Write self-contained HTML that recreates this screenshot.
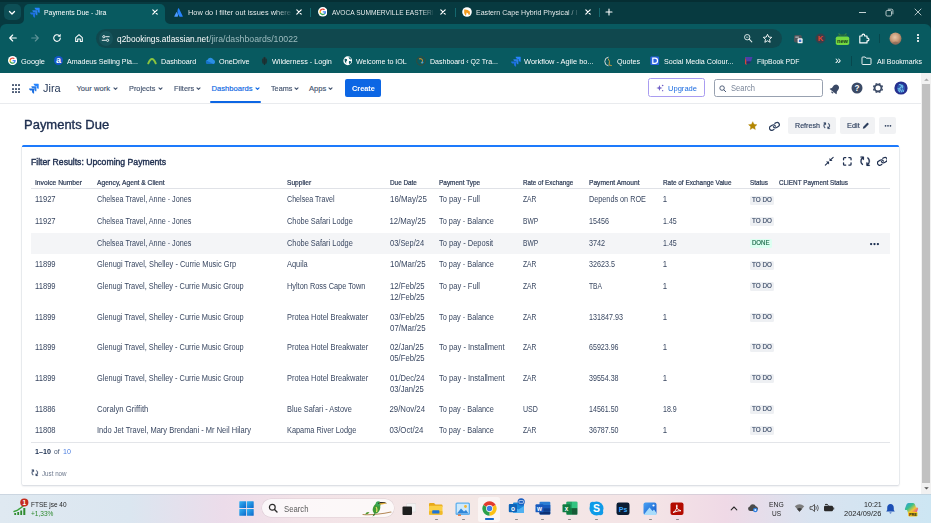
<!DOCTYPE html><html><head><meta charset="utf-8"><title>Payments Due - Jira</title><style>
html,body{margin:0;padding:0;}body{width:931px;height:523px;overflow:hidden;position:relative;background:#fff;font-family:"Liberation Sans", sans-serif;}#root{position:absolute;left:0;top:0;width:931px;height:523px;overflow:hidden;}#root div,#root svg{position:absolute;display:block;}span.t{position:absolute;white-space:nowrap;line-height:1;transform-origin:0 0;}
</style></head><body><div id="root">
<div style="left:0px;top:0px;width:931px;height:34px;background:#073a40;border-radius:0px;"></div>
<div style="left:0px;top:24px;width:931px;height:49px;background:#085a60;border-radius:0px;border-radius:6px 6px 0 0;"></div>
<div style="left:0px;top:0px;width:931px;height:1.5px;background:#052e33;border-radius:0px;"></div>
<div style="left:24.2px;top:3.5px;width:141px;height:21.5px;background:#085a60;border-radius:0px;border-radius:5px 5px 0 0;"></div>
<div style="left:4px;top:3.8px;width:16.5px;height:16.2px;background:#0d4f56;border-radius:5px;"></div>
<div style="left:310px;top:8px;width:1px;height:9px;background:#14686f;border-radius:0px;"></div>
<div style="left:455px;top:8px;width:1px;height:9px;background:#14686f;border-radius:0px;"></div>
<div style="left:599px;top:8px;width:1px;height:9px;background:#14686f;border-radius:0px;"></div>
<div style="left:858.5px;top:11.8px;width:7px;height:1px;background:#c3d3d4;border-radius:0px;"></div>
<div style="left:96px;top:28.5px;width:686px;height:19.5px;background:#10484e;border-radius:9.75px;"></div>
<div style="left:98.5px;top:31px;width:14.5px;height:14.5px;background:#16535a;border-radius:7.25px;"></div>
<div style="left:879.0px;top:33.5px;width:1px;height:9.5px;background:#07474d;border-radius:0px;"></div>
<div style="left:917.3px;top:34.45px;width:1.5px;height:1.5px;background:#ffffff;border-radius:0.75px;"></div>
<div style="left:917.3px;top:37.45px;width:1.5px;height:1.5px;background:#ffffff;border-radius:0.75px;"></div>
<div style="left:917.3px;top:40.45px;width:1.5px;height:1.5px;background:#ffffff;border-radius:0.75px;"></div>
<div style="left:851.2px;top:56px;width:1px;height:9.5px;background:#07474d;border-radius:0px;"></div>
<div style="left:0px;top:73px;width:921px;height:421.5px;background:#ffffff;border-radius:0px;"></div>
<div style="left:0px;top:102.9px;width:921px;height:1px;background:#e9ebee;border-radius:0px;"></div>
<div style="left:11.8px;top:84.3px;width:2.1px;height:2.1px;background:#42526e;border-radius:0.4px;"></div>
<div style="left:11.8px;top:87.6px;width:2.1px;height:2.1px;background:#42526e;border-radius:0.4px;"></div>
<div style="left:11.8px;top:90.89999999999999px;width:2.1px;height:2.1px;background:#42526e;border-radius:0.4px;"></div>
<div style="left:15.100000000000001px;top:84.3px;width:2.1px;height:2.1px;background:#42526e;border-radius:0.4px;"></div>
<div style="left:15.100000000000001px;top:87.6px;width:2.1px;height:2.1px;background:#42526e;border-radius:0.4px;"></div>
<div style="left:15.100000000000001px;top:90.89999999999999px;width:2.1px;height:2.1px;background:#42526e;border-radius:0.4px;"></div>
<div style="left:18.4px;top:84.3px;width:2.1px;height:2.1px;background:#42526e;border-radius:0.4px;"></div>
<div style="left:18.4px;top:87.6px;width:2.1px;height:2.1px;background:#42526e;border-radius:0.4px;"></div>
<div style="left:18.4px;top:90.89999999999999px;width:2.1px;height:2.1px;background:#42526e;border-radius:0.4px;"></div>
<div style="left:210px;top:101.4px;width:50.5px;height:2px;background:#0c66e4;border-radius:1px;"></div>
<div style="left:345px;top:79.2px;width:35.5px;height:17.8px;background:#0c66e4;border-radius:2px;"></div>
<div style="left:648.1px;top:78.4px;width:56.9px;height:19.1px;background:#ffffff;border-radius:2.5px;box-sizing:border-box;border:1px solid #a99cf0;"></div>
<div style="left:714.1px;top:79.4px;width:108.5px;height:17.2px;background:#ffffff;border-radius:2.5px;box-sizing:border-box;border:1px solid #98a1b0;"></div>
<div style="left:788px;top:116.9px;width:47.5px;height:17px;background:#f1f2f4;border-radius:2px;"></div>
<div style="left:840px;top:116.9px;width:35px;height:17px;background:#f1f2f4;border-radius:2px;"></div>
<div style="left:879.3px;top:116.9px;width:17.1px;height:17px;background:#f1f2f4;border-radius:2px;"></div>
<div style="left:22px;top:146px;width:877px;height:339px;background:#ffffff;border-radius:1.5px;box-shadow:0 0 0 0.5px #dcdfe4,0 1px 2px rgba(9,30,66,0.18);"></div>
<div style="left:22px;top:145.3px;width:877px;height:2px;background:#1d7afc;border-radius:0px;border-radius:1.5px 1.500px 0 0;"></div>
<div style="left:30.5px;top:187.8px;width:859.5px;height:1.5px;background:#e0e2e7;border-radius:0px;"></div>
<div style="left:30.5px;top:233.0px;width:859.5px;height:21.4px;background:#f4f5f7;border-radius:0px;"></div>
<div style="left:30.5px;top:441.9px;width:859.5px;height:1.5px;background:#e3e5e9;border-radius:0px;"></div>
<div style="left:750.3px;top:195.6px;width:23.5px;height:9.0px;background:#eef0f3;border-radius:1.5px;"></div>
<div style="left:750.3px;top:216.6px;width:23.5px;height:9.0px;background:#eef0f3;border-radius:1.5px;"></div>
<div style="left:750.3px;top:238.6px;width:21.8px;height:9.0px;background:#dcfff1;border-radius:1.5px;"></div>
<div style="left:750.3px;top:260.6px;width:23.5px;height:9.0px;background:#eef0f3;border-radius:1.5px;"></div>
<div style="left:750.3px;top:281.6px;width:23.5px;height:9.0px;background:#eef0f3;border-radius:1.5px;"></div>
<div style="left:750.3px;top:312.6px;width:23.5px;height:9.0px;background:#eef0f3;border-radius:1.5px;"></div>
<div style="left:750.3px;top:342.6px;width:23.5px;height:9.0px;background:#eef0f3;border-radius:1.5px;"></div>
<div style="left:750.3px;top:373.6px;width:23.5px;height:9.0px;background:#eef0f3;border-radius:1.5px;"></div>
<div style="left:750.3px;top:404.6px;width:23.5px;height:9.0px;background:#eef0f3;border-radius:1.5px;"></div>
<div style="left:750.3px;top:425.6px;width:23.5px;height:9.0px;background:#eef0f3;border-radius:1.5px;"></div>
<div style="left:921px;top:73px;width:10px;height:421.5px;background:#f1f1f1;border-radius:0px;"></div>
<div style="left:922.3px;top:83.5px;width:7.5px;height:399.2px;background:#c1c1c1;border-radius:0px;"></div>
<div style="left:0px;top:494.3px;width:931px;height:28.7px;background:linear-gradient(90deg,#dfe9f1 0%,#dbe6f0 14%,#ecdcea 24%,#f3e3e8 32%,#f4e8e6 50%,#f4e4e6 70%,#efd9e6 78%,#d9e3f0 87%,#cde6f3 100%);border-radius:0px;"></div>
<div style="left:0px;top:494.3px;width:931px;height:0.7px;background:rgba(170,180,195,0.35);border-radius:0px;"></div>
<div style="left:261.8px;top:499.3px;width:132px;height:18px;background:rgba(255,255,255,0.72);border-radius:9px;box-shadow:0 0 0 0.5px rgba(120,110,120,0.18);"></div>
<div style="left:434.5px;top:519px;width:3px;height:1.2px;background:#8a8a8a;border-radius:0.6px;"></div>
<div style="left:461.5px;top:519px;width:3px;height:1.2px;background:#8a8a8a;border-radius:0.6px;"></div>
<div style="left:478px;top:496.8px;width:22px;height:25px;background:rgba(255,255,255,0.55);border-radius:2.5px;"></div>
<div style="left:484.8px;top:518.3px;width:8.8px;height:1.6px;background:#1668c9;border-radius:0.8px;"></div>
<div style="left:514.5px;top:519px;width:3px;height:1.2px;background:#8a8a8a;border-radius:0.6px;"></div>
<div style="left:541px;top:519px;width:3px;height:1.2px;background:#8a8a8a;border-radius:0.6px;"></div>
<div style="left:568px;top:519px;width:3px;height:1.2px;background:#8a8a8a;border-radius:0.6px;"></div>
<div style="left:595px;top:519px;width:3px;height:1.2px;background:#8a8a8a;border-radius:0.6px;"></div>
<div style="left:648.5px;top:519px;width:3px;height:1.2px;background:#8a8a8a;border-radius:0.6px;"></div>
<div style="left:675.5px;top:519px;width:3px;height:1.2px;background:#8a8a8a;border-radius:0.6px;"></div>
<svg style="left:19px;top:19px;" width="5" height="5" viewBox="0 0 5 5"><path d="M5 0 V5 H0 A5 5 0 0 0 5 0Z" fill="#085a60"/></svg>
<svg style="left:165px;top:19px;" width="5" height="5" viewBox="0 0 5 5"><path d="M0 0 V5 H5 A5 5 0 0 1 0 0Z" fill="#085a60"/></svg>
<svg style="left:8px;top:9.5px;" width="8" height="6" viewBox="0 0 8 6"><path d="M1.5 1.5 L4 4 L6.5 1.5" fill="none" stroke="#fff" stroke-width="1.3" stroke-linecap="round" stroke-linejoin="round"/></svg>
<svg style="left:28.5px;top:7px;" width="11" height="11" viewBox="0 0 11 11"><g fill="#2684ff"><path d="M10.3 0.8H5.6c0 1.2 1 2.1 2.1 2.1h0.9v0.8c0 1.2 0.9 2.1 2.1 2.1V1.3c0-0.3-0.2-0.5-0.4-0.5z"/><path d="M8 3.2H3.3c0 1.2 1 2.1 2.1 2.1h0.9v0.9c0 1.2 0.9 2.1 2.1 2.1V3.7C8.400 3.400 8.200 3.200 8 3.200z" fill="#2b7de9"/><path d="M5.700 5.500H1c0 1.200 1 2.100 2.100 2.100H4v0.900c0 1.200 0.900 2.100 2.100 2.100V6C6.100 5.700 5.900 5.500 5.700 5.500z" fill="#1d6fe0"/></g></svg>
<svg style="left:151px;top:8.2px;" width="8" height="8" viewBox="0 0 8 8"><path d="M1.7999999999999998 1.7999999999999998 L6.2 6.2 M6.2 1.7999999999999998 L1.7999999999999998 6.2" stroke="#fff" stroke-width="1.2" stroke-linecap="round"/></svg>
<svg style="left:173.8px;top:7.5px;" width="9" height="9" viewBox="0 0 10 10"><path d="M3.100 4.600c-0.150-0.200-0.400-0.150-0.500 0.050L0.300 9.300c-0.100 0.200 0.050 0.450 0.300 0.450h3.300c0.100 0 0.200-0.050 0.250-0.150 0.700-1.450 0.300-3.700-1.050-5z" fill="#4c9aff"/><path d="M4.800 0.400C3.500 2.500 3.600 4.800 4.450 6.550l1.500 3c0.050 0.100 0.150 0.200 0.300 0.200h3.200c0.250 0 0.400-0.250 0.300-0.450L5.400 0.400c-0.100-0.250-0.450-0.250-0.600 0z" fill="#2684ff"/></svg>
<svg style="left:295px;top:8.2px;" width="8" height="8" viewBox="0 0 8 8"><path d="M1.7999999999999998 1.7999999999999998 L6.2 6.2 M6.2 1.7999999999999998 L1.7999999999999998 6.2" stroke="#fff" stroke-width="1.2" stroke-linecap="round"/></svg>
<svg style="left:317.7px;top:7.3999999999999995px;" width="9.6" height="9.6" viewBox="0 0 24 24"><circle cx="12" cy="12" r="12" fill="#fff"/><g transform="translate(3.6 3.6) scale(0.7)"><path fill="#4285F4" d="M23.500 12.300c0-0.800-0.100-1.600-0.200-2.300H12v4.500h6.500c-0.300 1.500-1.100 2.700-2.400 3.600v3h3.900c2.200-2.100 3.500-5.200 3.500-8.800z"/><path fill="#34A853" d="M12 24c3.200 0 6-1.100 8-2.900l-3.900-3c-1.100 0.700-2.500 1.200-4.100 1.200-3.100 0-5.800-2.100-6.700-5H1.300v3.100C3.300 21.300 7.300 24 12 24z"/><path fill="#FBBC05" d="M5.300 14.300c-0.200-0.700-0.400-1.500-0.400-2.300s0.100-1.600 0.400-2.300V6.600H1.300C0.500 8.200 0 10 0 12s0.500 3.800 1.300 5.400l4-3.100z"/><path fill="#EA4335" d="M12 4.800c1.800 0 3.300 0.600 4.600 1.800l3.400-3.400C17.900 1.200 15.200 0 12 0 7.300 0 3.300 2.700 1.300 6.600l4 3.100c0.900-2.900 3.600-4.900 6.700-4.900z"/></g></svg>
<svg style="left:439px;top:8.2px;" width="8" height="8" viewBox="0 0 8 8"><path d="M1.7999999999999998 1.7999999999999998 L6.2 6.2 M6.2 1.7999999999999998 L1.7999999999999998 6.2" stroke="#fff" stroke-width="1.2" stroke-linecap="round"/></svg>
<svg style="left:461.5px;top:7.4px;" width="10" height="10" viewBox="0 0 10 10"><circle cx="5" cy="5" r="4.800" fill="#fff"/><path d="M2.200 2.500 Q5.500 2 7.800 4.500 Q8.500 6.500 7 8.500 Q6.500 6 4.500 5.500 Q4.800 7.500 3.500 8.800 Q1.500 6 2.200 2.500Z" fill="#f39a1e"/></svg>
<svg style="left:584px;top:8.2px;" width="8" height="8" viewBox="0 0 8 8"><path d="M1.7999999999999998 1.7999999999999998 L6.2 6.2 M6.2 1.7999999999999998 L1.7999999999999998 6.2" stroke="#fff" stroke-width="1.2" stroke-linecap="round"/></svg>
<svg style="left:605px;top:8px;" width="8" height="8" viewBox="0 0 8 8"><path d="M4 1 V7 M1 4 H7" stroke="#fff" stroke-width="1.100" stroke-linecap="round"/></svg>
<svg style="left:885px;top:7.5px;" width="9" height="9" viewBox="0 0 9 9"><rect x="1" y="2.500" width="5.500" height="5.500" rx="1.200" fill="none" stroke="#c3d3d4" stroke-width="0.900"/><path d="M2.800 1.200 H6.600 A1.300 1.300 0 0 1 7.900 2.500 V6.300" fill="none" stroke="#c3d3d4" stroke-width="0.900"/></svg>
<svg style="left:913.5px;top:8px;" width="8" height="8" viewBox="0 0 8 8"><path d="M1.0 1.0 L7.0 7.0 M7.0 1.0 L1.0 7.0" stroke="#c3d3d4" stroke-width="0.9" stroke-linecap="round"/></svg>
<svg style="left:8.2px;top:33.2px;" width="10" height="10" viewBox="0 0 10 10"><path d="M8.3 5 H1.7000000000000002 M4.7 2 L1.7000000000000002 5 L4.7 8" fill="none" stroke="#ffffff" stroke-width="1.100" stroke-linecap="round" stroke-linejoin="round"/></svg>
<svg style="left:30.200000000000003px;top:33.2px;" width="10" height="10" viewBox="0 0 10 10"><path d="M1.7000000000000002 5 H8.3 M5.3 2 L8.3 5 L5.3 8" fill="none" stroke="#5d9297" stroke-width="1.100" stroke-linecap="round" stroke-linejoin="round"/></svg>
<svg style="left:52px;top:33px;" width="10" height="10" viewBox="0 0 10 10"><path d="M8.300 5 A3.300 3.300 0 1 1 7.300 2.650" fill="none" stroke="#fff" stroke-width="1.100" stroke-linecap="round"/><path d="M8.400 1.300 V3.500 H6.200 Z" fill="#fff" stroke="#fff" stroke-width="0.500" stroke-linejoin="round"/></svg>
<svg style="left:73.5px;top:33px;" width="10" height="10" viewBox="0 0 10 10"><path d="M1.700 4.600 L5 1.700 L8.300 4.600 V8.500 H6.300 V5.900 H3.700 V8.500 H1.700 Z" fill="none" stroke="#fff" stroke-width="1.050" stroke-linejoin="round"/></svg>
<svg style="left:101px;top:34px;" width="10" height="9" viewBox="0 0 10 9"><circle cx="2.800" cy="2.700" r="1.100" fill="none" stroke="#fff" stroke-width="0.900"/><path d="M4.800 2.700 H8.200" stroke="#fff" stroke-width="0.900" stroke-linecap="round"/><circle cx="6.600" cy="6.300" r="1.100" fill="none" stroke="#fff" stroke-width="0.900"/><path d="M1.200 6.300 H4.600" stroke="#fff" stroke-width="0.900" stroke-linecap="round"/></svg>
<svg style="left:743px;top:33px;" width="10" height="10" viewBox="0 0 10 10"><circle cx="4.200" cy="4.200" r="2.700" fill="none" stroke="#dfeaea" stroke-width="0.950"/><path d="M6.200 6.200 L8.800 8.800" stroke="#dfeaea" stroke-width="1.100" stroke-linecap="round"/><path d="M3 4.200 H5.400" stroke="#dfeaea" stroke-width="0.700"/></svg>
<svg style="left:762px;top:32.5px;" width="11" height="11" viewBox="0 0 11 11"><path d="M5.500 1.300 L6.750 4.050 L9.750 4.350 L7.500 6.350 L8.150 9.300 L5.500 7.750 L2.850 9.300 L3.500 6.350 L1.250 4.350 L4.250 4.050 Z" fill="none" stroke="#fff" stroke-width="0.900" stroke-linejoin="round"/></svg>
<svg style="left:792.5px;top:33.5px;" width="11" height="11" viewBox="0 0 11 11"><rect x="1" y="1" width="7.800" height="7.500" rx="1.700" fill="#50555b"/><rect x="2.300" y="2.600" width="3.600" height="1" fill="#c9cdd1"/><rect x="4.600" y="4.300" width="5" height="5" rx="0.900" fill="#f4f4f4"/><rect x="5.900" y="5.600" width="2.400" height="2.400" fill="#3f76c9"/></svg>
<svg style="left:814.5px;top:32.8px;" width="11" height="11" viewBox="0 0 11 11"><circle cx="5.500" cy="5.500" r="5" fill="#3a3f4a"/><text x="5.500" y="8.200" font-size="7.500" font-weight="700" font-family="Liberation Sans, sans-serif" fill="#e8402a" text-anchor="middle">K</text></svg>
<svg style="left:835px;top:32px;" width="15" height="14" viewBox="0 0 15 14"><path d="M4 1.500 L5.500 3.500 M11 1.500 L9.500 3.500" stroke="#5fd33a" stroke-width="0.700"/><rect x="3" y="2.500" width="9" height="1.300" fill="#2c6b3a"/><rect x="0.800" y="4.500" width="13.400" height="8.500" rx="1.800" fill="#74d840"/><text x="7.500" y="11.300" font-size="5.600" font-weight="700" font-family="Liberation Sans, sans-serif" fill="#14351a" text-anchor="middle">new</text></svg>
<svg style="left:857.8px;top:32.2px;" width="12" height="12" viewBox="0 0 12 12"><path d="M1.800 4 H4 V3.400 A1.350 1.350 0 0 1 6.700 3.400 V4 H9 V6.100 H9.600 A1.350 1.350 0 0 1 9.600 8.800 H9 V10.900 H1.800 Z" fill="none" stroke="#fff" stroke-width="1.150" stroke-linejoin="round"/></svg>
<svg style="left:889.0px;top:32px;" width="13" height="13" viewBox="0 0 13 13"><defs><radialGradient id="av" cx="0.450" cy="0.400" r="0.700"><stop offset="0" stop-color="#e9c7a8"/><stop offset="0.500" stop-color="#c89a78"/><stop offset="1" stop-color="#7a5a48"/></radialGradient></defs><circle cx="6.500" cy="6.500" r="6" fill="url(#av)"/><path d="M3 11.500 Q6.500 7.500 10 11.500 A6 6 0 0 1 3 11.500Z" fill="#8a6a5a" opacity="0.700"/></svg>
<svg style="left:7.6px;top:55.9px;" width="9.2" height="9.2" viewBox="0 0 24 24"><circle cx="12" cy="12" r="12" fill="#fff"/><g transform="translate(3.6 3.6) scale(0.7)"><path fill="#4285F4" d="M23.500 12.300c0-0.800-0.100-1.600-0.200-2.300H12v4.500h6.500c-0.300 1.500-1.100 2.700-2.400 3.600v3h3.900c2.200-2.100 3.500-5.200 3.500-8.800z"/><path fill="#34A853" d="M12 24c3.200 0 6-1.100 8-2.900l-3.900-3c-1.100 0.700-2.500 1.200-4.100 1.200-3.100 0-5.800-2.100-6.700-5H1.300v3.100C3.300 21.300 7.300 24 12 24z"/><path fill="#FBBC05" d="M5.300 14.300c-0.200-0.700-0.400-1.500-0.400-2.300s0.100-1.600 0.400-2.300V6.600H1.300C0.500 8.200 0 10 0 12s0.500 3.800 1.300 5.400l4-3.100z"/><path fill="#EA4335" d="M12 4.800c1.800 0 3.300 0.600 4.600 1.800l3.400-3.400C17.900 1.200 15.200 0 12 0 7.300 0 3.300 2.700 1.300 6.600l4 3.100c0.900-2.900 3.600-4.900 6.700-4.900z"/></g></svg>
<svg style="left:53.5px;top:56px;" width="9" height="9" viewBox="0 0 9 9"><circle cx="4.500" cy="4.500" r="4.500" fill="#1457c8"/><text x="4.500" y="7.300" font-size="9" font-weight="700" font-family="Liberation Sans, sans-serif" fill="#fff" text-anchor="middle">a</text></svg>
<svg style="left:147px;top:57px;" width="10" height="8" viewBox="0 0 10 8"><path d="M1.300 6.300 Q5 -2.300 8.700 6.300" fill="none" stroke="#8bc53f" stroke-width="2" stroke-linecap="round"/></svg>
<svg style="left:205px;top:56.5px;" width="11" height="8" viewBox="0 0 11 8"><path d="M2.800 7 A2.200 2.200 0 0 1 2.600 2.700 A3 3 0 0 1 8.200 2.600 A2.300 2.300 0 0 1 8.600 7 Z" fill="#2a8fe4"/><path d="M2.800 7 A2.200 2.200 0 0 1 1.200 3.500 L8.600 7 Z" fill="#1670c8"/></svg>
<svg style="left:259.5px;top:56px;" width="9" height="10" viewBox="0 0 9 10"><path d="M4.500 0.800 C8 2.500 8 6.500 4.500 9.200 C1 6.500 1 2.500 4.500 0.800Z" fill="#23393b"/><path d="M4.500 1.500 V9 M3 3 V7.500 M6 3 V7.500" stroke="#0f2a2d" stroke-width="0.600"/></svg>
<svg style="left:342.5px;top:56px;" width="9.5" height="9.5" viewBox="0 0 9.5 9.5"><circle cx="4.750" cy="4.750" r="4.400" fill="#fff"/><path d="M1.500 3 Q3 2.200 4 3.300 Q4.500 4.600 3.300 5.300 Q2.800 6.500 3.600 7.800 Q1.300 6.500 1.500 3Z M5.500 1 Q7.500 1.500 8.300 3.300 Q7 3.600 6.300 2.800 Z M6 5 Q7.500 4.600 8.500 5.600 Q8 7.600 6.300 8.300 Q5.600 6.600 6 5Z" fill="#0c5a61"/></svg>
<svg style="left:415.5px;top:56px;" width="10" height="10" viewBox="0 0 10 10"><circle cx="5" cy="5" r="4.300" fill="none" stroke="#3b4a3a" stroke-width="1"/><path d="M3 3 Q5 2 6.500 4 Q7 6 5 7" fill="none" stroke="#c98a2b" stroke-width="1.100"/><circle cx="6.400" cy="6.600" r="1" fill="#4aa0d8"/></svg>
<svg style="left:509.5px;top:55.5px;" width="11" height="11" viewBox="0 0 11 11"><g fill="#2684ff"><path d="M10.300 0.800H5.600c0 1.200 1 2.100 2.100 2.100h0.900v0.800c0 1.200 0.900 2.100 2.100 2.100V1.300c0-0.300-0.200-0.500-0.400-0.500z"/><path d="M8 3.200H3.300c0 1.200 1 2.100 2.100 2.100h0.900v0.900c0 1.200 0.900 2.100 2.100 2.100V3.700C8.400 3.400 8.200 3.200 8 3.200z" fill="#2b7de9"/><path d="M5.700 5.500H1c0 1.200 1 2.100 2.100 2.100H4v0.900c0 1.200 0.900 2.100 2.100 2.100V6C6.100 5.700 5.900 5.500 5.700 5.500z" fill="#1d6fe0"/></g></svg>
<svg style="left:603px;top:55.5px;" width="10" height="11" viewBox="0 0 10 11"><path d="M5.500 1.200 Q1.800 1.500 1.800 5.500 Q1.800 9.500 5.500 9.800" fill="none" stroke="#e8e8e8" stroke-width="0.900"/><path d="M5 2.500 Q7.500 5 6 9 M6 9 L8.800 9.600" fill="none" stroke="#d9a23a" stroke-width="0.900"/></svg>
<svg style="left:650px;top:56px;" width="9.5" height="9.5" viewBox="0 0 9.5 9.5"><rect x="0.400" y="0.400" width="8.700" height="8.700" rx="1" fill="#2b63e0"/><path d="M2.800 2.200 H5 A2.550 2.550 0 0 1 5 7.300 H2.800 Z" fill="none" stroke="#fff" stroke-width="1.200"/></svg>
<svg style="left:744px;top:56px;" width="10" height="10" viewBox="0 0 10 10"><path d="M1 1 H8.500 L7 5.500 H2.500 Z" fill="#4b3fa8"/><path d="M1 1 L2.500 5.500 L2.500 9 L1 8 Z" fill="#d8433a"/><path d="M2.500 5.500 H7 L5.500 7.500 H2.500Z" fill="#2c2470"/></svg>
<svg style="left:861.0px;top:56px;" width="11" height="9.5" viewBox="0 0 11 9.5"><path d="M1 1.800 Q1 1 1.800 1 H4.200 L5.300 2.200 H9.200 Q10 2.200 10 3 V7.700 Q10 8.500 9.200 8.500 H1.800 Q1 8.500 1 7.700 Z" fill="none" stroke="#fff" stroke-width="0.900" stroke-linejoin="round"/></svg>
<svg style="left:27.8px;top:83px;" width="11" height="11" viewBox="0 0 11 11"><g><path d="M10.300 0.800H5.600c0 1.200 1 2.100 2.100 2.100h0.900v0.800c0 1.200 0.900 2.100 2.100 2.100V1.300c0-0.300-0.200-0.500-0.400-0.500z" fill="#2684ff"/><path d="M8 3.200H3.300c0 1.200 1 2.100 2.100 2.100h0.900v0.900c0 1.200 0.900 2.100 2.100 2.100V3.700C8.400 3.400 8.200 3.200 8 3.200z" fill="#2b7de9"/><path d="M5.700 5.500H1c0 1.200 1 2.100 2.100 2.100H4v0.900c0 1.200 0.900 2.100 2.100 2.100V6C6.100 5.700 5.900 5.500 5.700 5.500z" fill="#1d6fe0"/></g></svg>
<svg style="left:112.7px;top:86.5px;" width="5" height="4" viewBox="0 0 5 4"><path d="M1.000 0.900 L2.500 2.400 L4.000 0.900" fill="none" stroke="#44546f" stroke-width="1.150" stroke-linecap="round" stroke-linejoin="round"/></svg>
<svg style="left:157.7px;top:86.5px;" width="5" height="4" viewBox="0 0 5 4"><path d="M1.000 0.900 L2.500 2.400 L4.000 0.900" fill="none" stroke="#44546f" stroke-width="1.150" stroke-linecap="round" stroke-linejoin="round"/></svg>
<svg style="left:196.2px;top:86.5px;" width="5" height="4" viewBox="0 0 5 4"><path d="M1.000 0.900 L2.500 2.400 L4.000 0.900" fill="none" stroke="#44546f" stroke-width="1.150" stroke-linecap="round" stroke-linejoin="round"/></svg>
<svg style="left:254.7px;top:86.5px;" width="5" height="4" viewBox="0 0 5 4"><path d="M1.000 0.900 L2.500 2.400 L4.000 0.900" fill="none" stroke="#0c66e4" stroke-width="1.150" stroke-linecap="round" stroke-linejoin="round"/></svg>
<svg style="left:293.7px;top:86.5px;" width="5" height="4" viewBox="0 0 5 4"><path d="M1.000 0.900 L2.500 2.400 L4.000 0.900" fill="none" stroke="#44546f" stroke-width="1.150" stroke-linecap="round" stroke-linejoin="round"/></svg>
<svg style="left:328.2px;top:86.5px;" width="5" height="4" viewBox="0 0 5 4"><path d="M1.000 0.900 L2.500 2.400 L4.000 0.900" fill="none" stroke="#44546f" stroke-width="1.150" stroke-linecap="round" stroke-linejoin="round"/></svg>
<svg style="left:655.8px;top:84.4px;" width="8" height="8" viewBox="0 0 7 7"><path d="M3 0.800 L3.700 2.800 L5.700 3.500 L3.700 4.200 L3 6.200 L2.300 4.200 L0.300 3.500 L2.300 2.800Z" fill="#6e5dc6"/><circle cx="5.800" cy="1.300" r="0.700" fill="#6e5dc6"/><circle cx="5.800" cy="5.800" r="0.600" fill="#6e5dc6"/></svg>
<svg style="left:718.8px;top:84.7px;" width="7.5" height="7.5" viewBox="0 0 7 7"><circle cx="2.900" cy="2.900" r="2.100" fill="none" stroke="#44546f" stroke-width="0.850"/><path d="M4.500 4.500 L6.300 6.300" stroke="#44546f" stroke-width="0.900" stroke-linecap="round"/></svg>
<svg style="left:828.9px;top:82.6px;" width="12" height="12" viewBox="0 0 12 12"><g transform="rotate(38 6 6)" fill="#3b4a66"><path d="M6 1.300 C3.700 1.300 2.900 3.200 2.900 5 V7 L1.800 8.500 V9.300 H10.200 V8.500 L9.100 7 V5 C9.100 3.200 8.300 1.300 6 1.300Z"/><path d="M4.700 9.900 H7.300 A1.300 1.300 0 0 1 4.700 9.900Z"/></g></svg>
<svg style="left:850.5px;top:82.3px;" width="12" height="12" viewBox="0 0 12 12"><circle cx="6" cy="6" r="5.500" fill="#3b4a66"/><text x="6" y="8.900" font-size="8.200" font-weight="700" font-family="Liberation Sans, sans-serif" fill="#fff" text-anchor="middle">?</text></svg>
<svg style="left:872.2px;top:82.3px;" width="12" height="12" viewBox="0 0 12 12"><circle cx="6" cy="6" r="3.350" fill="none" stroke="#3b4a66" stroke-width="1.700"/><g stroke="#3b4a66" stroke-width="2.100"><path d="M9.60 7.49 L10.67 7.93"/><path d="M7.49 9.60 L7.93 10.67"/><path d="M4.51 9.60 L4.07 10.67"/><path d="M2.40 7.49 L1.33 7.93"/><path d="M2.40 4.51 L1.33 4.07"/><path d="M4.51 2.40 L4.07 1.33"/><path d="M7.49 2.40 L7.93 1.33"/><path d="M9.60 4.51 L10.67 4.07"/></g></svg>
<svg style="left:894.3px;top:81.3px;" width="14" height="14" viewBox="0 0 14 14"><circle cx="7" cy="7" r="6.600" fill="#27308f"/><ellipse cx="7" cy="7.300" rx="4" ry="4.600" fill="#2f5fb5" opacity="0.850"/><path d="M5.300 3.500 Q7.800 3.800 7.300 5.800 Q6.500 7.300 4.800 7.800 Q6.800 8.500 7.800 10.800 M8.300 4.500 Q9.300 5.800 8.300 7 M4.300 9 Q5.800 9.500 5.300 10.800 M8.300 8.800 Q9.800 9.300 9.300 10.500" fill="none" stroke="#6fc0ea" stroke-width="1.100" stroke-linecap="round"/></svg>
<svg style="left:748.2px;top:121.2px;" width="9.5" height="9.5" viewBox="0 0 10.5 10.5"><path d="M5.250 0.700 L6.650 3.650 L9.900 4.050 L7.500 6.250 L8.150 9.450 L5.250 7.850 L2.350 9.450 L3 6.250 L0.600 4.050 L3.850 3.650 Z" fill="#b38600" stroke="#b38600" stroke-width="0.400" stroke-linejoin="round"/></svg>
<svg style="left:769.3px;top:120.7px;" width="10.8" height="10.8" viewBox="0 0 24 24"><g fill="none" stroke="#2c3e5d" stroke-width="2.8" stroke-linecap="round" stroke-linejoin="round" transform="rotate(12 12 12)"><path d="M10 13a5 5 0 0 0 7.540 0.540l3-3a5 5 0 0 0-7.070-7.070l-1.720 1.710"/><path d="M14 11a5 5 0 0 0-7.540-0.540l-3 3a5 5 0 0 0 7.070 7.070l1.710-1.710"/></g></svg>
<svg style="left:822.12px;top:120.83px;" width="9.45" height="9.45" viewBox="0 0 24 24"><path fill="#2c3e5d" stroke="#2c3e5d" stroke-width="0.5" d="M8 6.003v2.995a1 1 0 1 0 2 0V5.102C10 4.494 9.507 4 8.900 4H5a1 1 0 0 0 0 2.003h1.672A7.995 7.995 0 0 0 4 12c0 2.370 1.033 4.537 2.769 6.018a1 1 0 1 0 1.298-1.521A5.985 5.985 0 0 1 6 12a5.990 5.990 0 0 1 2-4.462z m8 11.994v-2.995a1 1 0 1 0-2 0v3.896c0 .608.493 1.102 1.100 1.102H19a1 1 0 0 0 0-2.003h-1.672A7.995 7.995 0 0 0 20 12c0-2.370-1.033-4.537-2.769-6.018a1 1 0 1 0-1.298 1.521A5.985 5.985 0 0 1 18 12a5.990 5.990 0 0 1-2 4.462z"/></svg>
<svg style="left:862.3px;top:122px;" width="7.5" height="7.5" viewBox="0 0 7.5 7.5"><path d="M0.800 6.700 L1.300 4.700 L5 1 Q5.500 0.500 6.100 1.100 L6.400 1.400 Q7 2 6.500 2.500 L2.800 6.200 Z" fill="#2c3e5d"/></svg>
<svg style="left:883px;top:123px;" width="10" height="6" viewBox="0 0 10 6"><circle cx="2.550" cy="2.850" r="0.850" fill="#2c3e5d"/><circle cx="5" cy="2.850" r="0.850" fill="#2c3e5d"/><circle cx="7.450" cy="2.850" r="0.850" fill="#2c3e5d"/></svg>
<svg style="left:824.3px;top:155.7px;" width="10.5" height="10.5" viewBox="0 0 24 24"><g stroke="#1f2f4f" stroke-width="2.400" stroke-linecap="round"><path d="M15.500 8.500 L21 3 M8.500 15.500 L3 21"/></g><path d="M12.500 4.500 V11.500 H19.500 Z" fill="#1f2f4f"/><path d="M11.500 19.500 V12.500 H4.500 Z" fill="#1f2f4f"/></svg>
<svg style="left:841.9px;top:155.8px;" width="10.6" height="10.6" viewBox="0 0 24 24"><g fill="none" stroke="#1f2f4f" stroke-width="2.900" stroke-linecap="round" stroke-linejoin="round"><path d="M3.500 8.500 V5.500 Q3.500 3.500 5.500 3.500 H8.500 M15.500 3.500 H18.500 Q20.500 3.500 20.500 5.500 V8.500 M20.500 15.500 V18.500 Q20.500 20.500 18.500 20.500 H15.500 M8.500 20.500 H5.500 Q3.500 20.500 3.500 18.500 V15.500"/></g></svg>
<svg style="left:857.52px;top:153.93px;" width="14.25" height="14.25" viewBox="0 0 24 24"><path fill="#1f2f4f" stroke="#1f2f4f" stroke-width="0.3" d="M8 6.003v2.995a1 1 0 1 0 2 0V5.102C10 4.494 9.507 4 8.900 4H5a1 1 0 0 0 0 2.003h1.672A7.995 7.995 0 0 0 4 12c0 2.370 1.033 4.537 2.769 6.018a1 1 0 1 0 1.298-1.521A5.985 5.985 0 0 1 6 12a5.990 5.990 0 0 1 2-4.462z m8 11.994v-2.995a1 1 0 1 0-2 0v3.896c0 .608.493 1.102 1.100 1.102H19a1 1 0 0 0 0-2.003h-1.672A7.995 7.995 0 0 0 20 12c0-2.370-1.033-4.537-2.769-6.018a1 1 0 1 0-1.298 1.521A5.985 5.985 0 0 1 18 12a5.990 5.990 0 0 1-2 4.462z"/></svg>
<svg style="left:876.6px;top:155.8px;" width="10.7" height="10.7" viewBox="0 0 24 24"><g fill="none" stroke="#1f2f4f" stroke-width="2.8" stroke-linecap="round" stroke-linejoin="round" transform="rotate(12 12 12)"><path d="M10 13a5 5 0 0 0 7.540 0.540l3-3a5 5 0 0 0-7.070-7.070l-1.720 1.710"/><path d="M14 11a5 5 0 0 0-7.540-0.540l-3 3a5 5 0 0 0 7.070 7.070l1.710-1.710"/></g></svg>
<svg style="left:868px;top:241px;" width="14" height="6" viewBox="0 0 14 6"><circle cx="3.100" cy="3.100" r="1.150" fill="#172b4d"/><circle cx="6.500" cy="3.100" r="1.150" fill="#172b4d"/><circle cx="9.900" cy="3.100" r="1.150" fill="#172b4d"/></svg>
<svg style="left:30.0px;top:468.1px;" width="9.6" height="9.6" viewBox="0 0 24 24"><path fill="#44546f" stroke="#44546f" stroke-width="0.5" d="M8 6.003v2.995a1 1 0 1 0 2 0V5.102C10 4.494 9.507 4 8.900 4H5a1 1 0 0 0 0 2.003h1.672A7.995 7.995 0 0 0 4 12c0 2.370 1.033 4.537 2.769 6.018a1 1 0 1 0 1.298-1.521A5.985 5.985 0 0 1 6 12a5.990 5.990 0 0 1 2-4.462z m8 11.994v-2.995a1 1 0 1 0-2 0v3.896c0 .608.493 1.102 1.100 1.102H19a1 1 0 0 0 0-2.003h-1.672A7.995 7.995 0 0 0 20 12c0-2.370-1.033-4.537-2.769-6.018a1 1 0 1 0-1.298 1.521A5.985 5.985 0 0 1 18 12a5.990 5.990 0 0 1-2 4.462z"/></svg>
<svg style="left:922.5px;top:76.5px;" width="7" height="5" viewBox="0 0 7 5"><path d="M1.200 3.800 L3.500 1.400 L5.800 3.800 Z" fill="#a3a3a3"/></svg>
<svg style="left:922.5px;top:485.5px;" width="7" height="5" viewBox="0 0 7 5"><path d="M1.200 1.200 L3.500 3.600 L5.800 1.200 Z" fill="#505050"/></svg>
<svg style="left:11.6px;top:497px;" width="18" height="19" viewBox="0 0 18 19"><path d="M2 14.500 Q8 13 13.500 6.500" fill="none" stroke="#3aa23a" stroke-width="1.300" stroke-linecap="round"/><rect x="2.300" y="16" width="1.800" height="2" fill="#2e8b2e"/><rect x="5.300" y="15" width="1.800" height="3" fill="#2e8b2e"/><rect x="8.300" y="13.500" width="1.800" height="4.500" fill="#2e8b2e"/><rect x="11.300" y="11" width="2" height="7" fill="#2e8b2e"/><circle cx="12.300" cy="5.500" r="4.100" fill="#c42b1c"/><text x="12.300" y="8" font-size="6.500" font-weight="700" font-family="Liberation Sans, sans-serif" fill="#fff" text-anchor="middle">1</text></svg>
<svg style="left:238.5px;top:501px;" width="15" height="15" viewBox="0 0 15 15"><defs><linearGradient id="wl" x1="0" y1="0" x2="1" y2="1"><stop offset="0" stop-color="#35b5f5"/><stop offset="1" stop-color="#0a66c9"/></linearGradient></defs><rect x="0.300" y="0.300" width="6.800" height="6.800" rx="0.500" fill="url(#wl)"/><rect x="7.900" y="0.300" width="6.800" height="6.800" rx="0.500" fill="url(#wl)"/><rect x="0.300" y="7.900" width="6.800" height="6.800" rx="0.500" fill="url(#wl)"/><rect x="7.900" y="7.900" width="6.800" height="6.800" rx="0.500" fill="url(#wl)"/></svg>
<svg style="left:267.5px;top:503px;" width="10" height="10" viewBox="0 0 10 10"><circle cx="4.300" cy="4.300" r="2.900" fill="none" stroke="#2a2a2a" stroke-width="1.200"/><path d="M6.500 6.500 L9 9" stroke="#2a2a2a" stroke-width="1.400" stroke-linecap="round"/></svg>
<svg style="left:362px;top:499px;" width="31" height="18" viewBox="0 0 31 18"><path d="M1 15.500 Q12 16.500 29 13" fill="none" stroke="#b48a5a" stroke-width="1.100" stroke-linecap="round"/><path d="M3 15.500 Q5 12 7.500 13.500 Q6 15.500 3 15.500Z" fill="#4f9a2e"/><ellipse cx="14.500" cy="9.500" rx="3.600" ry="5.300" fill="#3f9a35" transform="rotate(18 14.500 9.500)"/><path d="M12.500 13.500 L10.500 17.500 L13 16 Z" fill="#2f7a2a"/><circle cx="16.300" cy="4.800" r="2.600" fill="#3aa655"/><path d="M17.500 3 Q22 2.500 25 4.200 Q21 5.500 17.800 5.800Z" fill="#e8b33a"/><path d="M17.500 3 Q22 2.500 25 4.200 Q21 3.900 17.600 4.300Z" fill="#2a2a2a"/><circle cx="16.800" cy="4.300" r="0.550" fill="#111"/><path d="M14 8 Q15.500 10 14.500 13" fill="none" stroke="#e9e46a" stroke-width="1.200"/></svg>
<svg style="left:401.5px;top:502.5px;" width="14.5" height="13" viewBox="0 0 14.5 13"><rect x="4.500" y="0.500" width="9.500" height="8.500" rx="1" fill="#f2f2f2" stroke="#d0d0d0" stroke-width="0.400"/><rect x="0.500" y="3.500" width="9.500" height="8.500" rx="1" fill="#1e1e1e"/></svg>
<svg style="left:428px;top:502px;" width="15.5" height="14" viewBox="0 0 15.5 14"><path d="M1 2 Q1 1 2 1 H6 L7.500 2.500 H13.500 Q14.500 2.500 14.500 3.500 V5 H1Z" fill="#e8a91a"/><rect x="1" y="3.800" width="13.500" height="9" rx="1" fill="#fbd045"/><rect x="1" y="9" width="13.500" height="3.800" rx="0.800" fill="#f0b92a"/><rect x="4.200" y="8.300" width="7.200" height="3.200" rx="0.600" fill="#1d74d8"/></svg>
<svg style="left:455px;top:501.5px;" width="15.5" height="14.5" viewBox="0 0 15.5 14.5"><rect x="0.500" y="0.500" width="14.500" height="12.500" rx="1.500" fill="#5fb0ee"/><rect x="1.800" y="1.800" width="11.900" height="9.900" rx="0.800" fill="#cfe9fb"/><path d="M2 11.500 L6 6.500 L9 9.500 L11 8 L13.500 11.500Z" fill="#2f86d8"/><circle cx="10.500" cy="4.500" r="1.400" fill="#f2b531"/><rect x="3" y="12.500" width="3" height="1.300" fill="#e86b2a"/></svg>
<svg style="left:481.7px;top:500.7px;" width="15" height="15" viewBox="0 0 15 15"><circle cx="7.500" cy="7.500" r="7.200" fill="#fff"/><path d="M7.500 7.500 L1.270 3.900 A7.200 7.200 0 0 1 13.730 3.900 Z" fill="#e33b2e"/><path d="M7.500 7.500 L13.730 3.900 A7.200 7.200 0 0 1 7.500 14.700 Z" fill="#fbc116"/><path d="M7.500 7.500 L7.500 14.700 A7.200 7.200 0 0 1 1.270 3.900 Z" fill="#2ba14b"/><circle cx="7.500" cy="7.500" r="3.400" fill="#fff"/><circle cx="7.500" cy="7.500" r="2.700" fill="#3f7fe8"/></svg>
<svg style="left:507.5px;top:498px;" width="18" height="18" viewBox="0 0 18 18"><rect x="5" y="4.500" width="11" height="10.500" rx="1" fill="#1a86d8"/><path d="M5 8 L10.500 11.500 L16 8 V15 H5Z" fill="#4fb1f2"/><rect x="0.800" y="6" width="8.200" height="8.200" rx="1" fill="#0f64b8"/><text x="4.900" y="12.500" font-size="6.500" font-weight="700" font-family="Liberation Sans, sans-serif" fill="#fff" text-anchor="middle">o</text><circle cx="13.200" cy="3.800" r="3.600" fill="#1b5fc0"/><rect x="11" y="2.500" width="4.400" height="2.800" rx="0.500" fill="none" stroke="#fff" stroke-width="0.600"/></svg>
<svg style="left:534.5px;top:501px;" width="16" height="14.5" viewBox="0 0 16 14.5"><rect x="4.500" y="0.800" width="10.800" height="12.800" rx="1" fill="#2b7cd3"/><rect x="4.500" y="4" width="10.800" height="3.200" fill="#185abd"/><rect x="4.500" y="7.200" width="10.800" height="3.200" fill="#103f91"/><rect x="4.500" y="10.400" width="10.800" height="3.200" rx="1" fill="#0b2f73"/><rect x="0.500" y="3.300" width="8" height="8" rx="0.900" fill="#185abd"/><text x="4.500" y="9.700" font-size="6.300" font-weight="700" font-family="Liberation Sans, sans-serif" fill="#fff" text-anchor="middle">w</text></svg>
<svg style="left:561.5px;top:501px;" width="16" height="14.5" viewBox="0 0 16 14.5"><rect x="4.500" y="0.800" width="10.800" height="12.800" rx="1" fill="#21a366"/><rect x="4.500" y="0.800" width="5.400" height="6.400" fill="#21a366"/><rect x="9.900" y="0.800" width="5.400" height="6.400" fill="#33c481"/><rect x="4.500" y="7.200" width="5.400" height="6.400" fill="#107c41"/><rect x="9.900" y="7.200" width="5.400" height="6.400" fill="#185c37"/><rect x="0.500" y="3.300" width="8" height="8" rx="0.900" fill="#107c41"/><text x="4.500" y="9.700" font-size="6.300" font-weight="700" font-family="Liberation Sans, sans-serif" fill="#fff" text-anchor="middle">x</text></svg>
<svg style="left:588.5px;top:500.5px;" width="15" height="15" viewBox="0 0 15 15"><circle cx="7.500" cy="7.500" r="7" fill="#0f9be8"/><circle cx="3.800" cy="3.800" r="3" fill="#0f9be8"/><circle cx="11.200" cy="11.200" r="3" fill="#0f9be8"/><text x="7.500" y="11.200" font-size="10.500" font-weight="700" font-family="Liberation Sans, sans-serif" fill="#fff" text-anchor="middle">S</text></svg>
<svg style="left:615.5px;top:501.5px;" width="14" height="13.5" viewBox="0 0 14 13.5"><rect x="0.500" y="0.500" width="13" height="12.500" rx="2.200" fill="#0b1d33"/><text x="7" y="9.800" font-size="7" font-weight="700" font-family="Liberation Sans, sans-serif" fill="#3aa8ff" text-anchor="middle">Ps</text></svg>
<svg style="left:642.5px;top:501.5px;" width="14" height="13.5" viewBox="0 0 14 13.5"><defs><linearGradient id="ph" x1="0" y1="0" x2="1" y2="1"><stop offset="0" stop-color="#4aa3f5"/><stop offset="1" stop-color="#1457c8"/></linearGradient></defs><rect x="0.500" y="0.500" width="13" height="12.500" rx="2" fill="url(#ph)"/><path d="M1 12.500 L6.500 5.500 L9.500 9 L11 7.500 L13.500 11 V12 Q13.500 13 12.500 13 H2 Q1 13 1 12.500Z" fill="#a8dcfb"/><circle cx="10.500" cy="3.500" r="1.100" fill="#fff"/></svg>
<svg style="left:669.5px;top:501.5px;" width="14" height="13.5" viewBox="0 0 14 13.5"><rect x="0.500" y="0.500" width="13" height="12.500" rx="2" fill="#b30b00"/><path d="M3 10.500 Q5.500 9.500 6.800 6 Q7.600 3.500 6.800 2.800 Q6 3.300 6.600 5.500 Q7.500 8 11 8.800 Q9 8.200 3 10.500Z" fill="none" stroke="#fff" stroke-width="0.900" stroke-linejoin="round"/></svg>
<svg style="left:729.5px;top:505px;" width="8" height="7" viewBox="0 0 8 7"><path d="M1.200 4.800 L4 2 L6.800 4.800" fill="none" stroke="#2a2a2a" stroke-width="1.100" stroke-linecap="round" stroke-linejoin="round"/></svg>
<svg style="left:747px;top:503px;" width="12" height="10" viewBox="0 0 12 10"><path d="M3 8 A2.300 2.300 0 0 1 2.800 3.500 A3.200 3.200 0 0 1 8.800 3.300 A2.400 2.400 0 0 1 9.200 8 Z" fill="#4a4a4a"/><circle cx="8.300" cy="7" r="2.300" fill="#2f7fe0"/><circle cx="8.300" cy="7" r="1" fill="#e9f2ff"/></svg>
<svg style="left:793.5px;top:502.5px;" width="11" height="10" viewBox="0 0 11 10"><path d="M5.500 8.800 L0.800 3.300 Q5.500 -0.600 10.200 3.300 Z" fill="#7d7d7d"/><path d="M5.500 8.800 L3 5.900 Q5.500 4 8 5.900Z" fill="#3b3b3b"/></svg>
<svg style="left:808.5px;top:502.5px;" width="12" height="10" viewBox="0 0 12 10"><path d="M1 3.700 H3 L5.500 1.500 V8.500 L3 6.300 H1Z" fill="none" stroke="#4a4a4a" stroke-width="0.900" stroke-linejoin="round"/><path d="M7 3.500 Q8 5 7 6.500 M8.600 2.300 Q10.300 5 8.600 7.700" fill="none" stroke="#4a4a4a" stroke-width="0.800" stroke-linecap="round"/></svg>
<svg style="left:823px;top:502.5px;" width="12" height="10" viewBox="0 0 12 10"><rect x="1" y="2.800" width="9" height="5.400" rx="1.200" fill="#2a2a2a"/><rect x="10.200" y="4.300" width="1" height="2.400" rx="0.400" fill="#2a2a2a"/><path d="M3.500 0.800 L5.500 2.800 M2 1.500 H4.500" stroke="#2a2a2a" stroke-width="0.900"/></svg>
<svg style="left:885px;top:502.5px;" width="11" height="12" viewBox="0 0 11 12"><path d="M5.500 1 Q8.800 1.300 8.800 5 V7 L9.800 8.600 H1.200 L2.200 7 V5 Q2.200 1.300 5.500 1Z" fill="#1b4fb5"/><path d="M4.300 9.500 H6.700 Q5.500 11.300 4.300 9.500Z" fill="#1b4fb5"/></svg>
<svg style="left:904.3px;top:501.5px;" width="15" height="15" viewBox="0 0 15 15"><defs><linearGradient id="cp" x1="0" y1="0" x2="1" y2="1"><stop offset="0" stop-color="#2f9be8"/><stop offset="0.350" stop-color="#39c08a"/><stop offset="0.600" stop-color="#f2c53a"/><stop offset="0.800" stop-color="#e8558a"/><stop offset="1" stop-color="#8a4fe0"/></linearGradient></defs><path d="M4.500 1 H9 Q10.500 1 11 2.500 L12 5.500 H13 Q14.500 5.500 14 7 L12.500 11 Q12 12.500 10.500 12.500 H6 Q4.500 12.500 4 11 L3 8 H2 Q0.500 8 1 6.500 L2.500 2.500 Q3 1 4.500 1Z" fill="url(#cp)"/><rect x="4.300" y="9.800" width="9.200" height="4.600" rx="1.200" fill="#f5c518"/><text x="8.900" y="13.500" font-size="3.900" font-weight="700" font-family="Liberation Sans, sans-serif" fill="#1a1a1a" text-anchor="middle">PRE</text></svg>
<span class="t" style="left:44.00px;top:9px;font-size:8.1px;font-weight:400;color:#ffffff;transform:scale(0.8514,1.0);">Payments Due - Jira</span>
<span class="t" style="left:188.00px;top:9px;font-size:8.1px;font-weight:400;color:#ffffff;transform:scale(0.9152,1.0);background:linear-gradient(90deg,#ffffff 0,#ffffff 86%,rgba(255,255,255,0.15) 100%);-webkit-background-clip:text;background-clip:text;color:transparent;">How do I filter out issues where</span>
<span class="t" style="left:332.00px;top:9px;font-size:8.1px;font-weight:400;color:#ffffff;transform:scale(0.8185,1.0);background:linear-gradient(90deg,#ffffff 0,#ffffff 88%,rgba(255,255,255,0.15) 100%);-webkit-background-clip:text;background-clip:text;color:transparent;">AVOCA SUMMERVILLE EASTERI</span>
<span class="t" style="left:476.00px;top:9px;font-size:8.1px;font-weight:400;color:#ffffff;transform:scale(0.8707,1.0);background:linear-gradient(90deg,#ffffff 0,#ffffff 90%,rgba(255,255,255,0.15) 100%);-webkit-background-clip:text;background-clip:text;color:transparent;">Eastern Cape Hybrid Physical / I</span>
<span class="t" style="left:117.00px;top:35px;font-size:9px;font-weight:400;color:#ffffff;transform:scale(0.9242,1.0);">q2bookings.atlassian.net</span>
<span class="t" style="left:208.80px;top:35px;font-size:9px;font-weight:400;color:#9dbcbf;transform:scale(0.9703,1.0);">/jira/dashboards/10022</span>
<span class="t" style="left:20.50px;top:58px;font-size:7.6px;font-weight:400;color:#ffffff;transform:scale(0.9792,1.0);">Google</span>
<span class="t" style="left:67.00px;top:58px;font-size:7.6px;font-weight:400;color:#ffffff;transform:scale(0.9276,1.0);">Amadeus Selling Pla...</span>
<span class="t" style="left:160.50px;top:58px;font-size:7.6px;font-weight:400;color:#ffffff;transform:scale(0.9459,1.0);">Dashboard</span>
<span class="t" style="left:218.50px;top:58px;font-size:7.6px;font-weight:400;color:#ffffff;transform:scale(0.9531,1.0);">OneDrive</span>
<span class="t" style="left:272.00px;top:58px;font-size:7.6px;font-weight:400;color:#ffffff;transform:scale(0.9524,1.0);">Wilderness - Login</span>
<span class="t" style="left:355.50px;top:58px;font-size:7.6px;font-weight:400;color:#ffffff;transform:scale(0.9352,1.0);">Welcome to IOL</span>
<span class="t" style="left:429.50px;top:58px;font-size:7.6px;font-weight:400;color:#ffffff;transform:scale(0.9247,1.0);">Dashboard ‹ Q2 Tra...</span>
<span class="t" style="left:523.50px;top:58px;font-size:7.6px;font-weight:400;color:#ffffff;transform:scale(0.9789,1.0);">Workflow - Agile bo...</span>
<span class="t" style="left:616.50px;top:58px;font-size:7.6px;font-weight:400;color:#ffffff;transform:scale(0.9400,1.0);">Quotes</span>
<span class="t" style="left:663.50px;top:58px;font-size:7.6px;font-weight:400;color:#ffffff;transform:scale(0.9392,1.0);">Social Media Colour...</span>
<span class="t" style="left:757.00px;top:58px;font-size:7.6px;font-weight:400;color:#ffffff;transform:scale(0.9043,1.0);">FlipBook PDF</span>
<span class="t" style="left:835.20px;top:55px;font-size:10.5px;font-weight:400;color:#ffffff;transform:scale(1.0500,1.0);">»</span>
<span class="t" style="left:877.00px;top:58px;font-size:7.6px;font-weight:400;color:#ffffff;transform:scale(0.9286,1.0);">All Bookmarks</span>
<span class="t" style="left:42.70px;top:82px;font-size:11.7px;font-weight:400;color:#253858;transform:scale(0.9368,1.0);">Jira</span>
<span class="t" style="left:76.50px;top:85px;font-size:7.6px;font-weight:400;color:#44546f;-webkit-text-stroke:0.15px #44546f;">Your work</span>
<span class="t" style="left:128.50px;top:85px;font-size:7.6px;font-weight:400;color:#44546f;-webkit-text-stroke:0.15px #44546f;transform:scale(0.9643,1.0);">Projects</span>
<span class="t" style="left:173.50px;top:85px;font-size:7.6px;font-weight:400;color:#44546f;-webkit-text-stroke:0.15px #44546f;transform:scale(0.9762,1.0);">Filters</span>
<span class="t" style="left:211.50px;top:85px;font-size:7.6px;font-weight:400;color:#0c66e4;-webkit-text-stroke:0.15px #0c66e4;">Dashboards</span>
<span class="t" style="left:270.50px;top:85px;font-size:7.6px;font-weight:400;color:#44546f;-webkit-text-stroke:0.15px #44546f;transform:scale(0.9545,1.0);">Teams</span>
<span class="t" style="left:309.00px;top:85px;font-size:7.6px;font-weight:400;color:#44546f;-webkit-text-stroke:0.15px #44546f;">Apps</span>
<span class="t" style="left:351.50px;top:85px;font-size:7.5px;font-weight:700;color:#ffffff;transform:scale(0.9783,1.0);">Create</span>
<span class="t" style="left:668.20px;top:85px;font-size:7.8px;font-weight:400;color:#1d6ce0;transform:scale(0.9700,1.0);">Upgrade</span>
<span class="t" style="left:730.80px;top:85px;font-size:8.2px;font-weight:400;color:#7a8699;transform:scale(0.9231,1.0);">Search</span>
<span class="t" style="left:24.00px;top:119px;font-size:12.2px;font-weight:400;color:#1d2d4e;-webkit-text-stroke:0.35px #1d2d4e;transform:scale(1.0650,1.0);">Payments Due</span>
<span class="t" style="left:794.60px;top:122px;font-size:7.6px;font-weight:400;color:#2c3e5d;-webkit-text-stroke:0.15px #2c3e5d;transform:scale(0.9370,1.0);">Refresh</span>
<span class="t" style="left:846.50px;top:122px;font-size:7.6px;font-weight:400;color:#2c3e5d;-webkit-text-stroke:0.15px #2c3e5d;transform:scale(0.9692,1.0);">Edit</span>
<span class="t" style="left:31.00px;top:158px;font-size:9.2px;font-weight:400;color:#1d2d4e;-webkit-text-stroke:0.4px #1d2d4e;transform:scale(0.9410,1.0);">Filter Results: Upcoming Payments</span>
<span class="t" style="left:34.50px;top:179px;font-size:7.0px;font-weight:400;color:#2c3a55;-webkit-text-stroke:0.22px #2c3a55;transform:scale(0.9592,1.0);">Invoice Number</span>
<span class="t" style="left:96.50px;top:179px;font-size:7.0px;font-weight:400;color:#2c3a55;-webkit-text-stroke:0.22px #2c3a55;transform:scale(0.9514,1.0);">Agency, Agent &amp; Client</span>
<span class="t" style="left:286.50px;top:179px;font-size:7.0px;font-weight:400;color:#2c3a55;-webkit-text-stroke:0.22px #2c3a55;transform:scale(0.9423,1.0);">Supplier</span>
<span class="t" style="left:389.50px;top:179px;font-size:7.0px;font-weight:400;color:#2c3a55;-webkit-text-stroke:0.22px #2c3a55;transform:scale(0.9100,1.0);">Due Date</span>
<span class="t" style="left:438.50px;top:179px;font-size:7.0px;font-weight:400;color:#2c3a55;-webkit-text-stroke:0.22px #2c3a55;transform:scale(0.9222,1.0);">Payment Type</span>
<span class="t" style="left:523.00px;top:179px;font-size:7.0px;font-weight:400;color:#2c3a55;-webkit-text-stroke:0.22px #2c3a55;transform:scale(0.9018,1.0);">Rate of Exchange</span>
<span class="t" style="left:589.30px;top:179px;font-size:7.0px;font-weight:400;color:#2c3a55;-webkit-text-stroke:0.22px #2c3a55;transform:scale(0.9481,1.0);">Payment Amount</span>
<span class="t" style="left:662.50px;top:179px;font-size:7.0px;font-weight:400;color:#2c3a55;-webkit-text-stroke:0.22px #2c3a55;transform:scale(0.9133,1.0);">Rate of Exchange Value</span>
<span class="t" style="left:750.30px;top:179px;font-size:7.0px;font-weight:400;color:#2c3a55;-webkit-text-stroke:0.22px #2c3a55;transform:scale(0.9000,1.0);">Status</span>
<span class="t" style="left:779.00px;top:179px;font-size:7.0px;font-weight:400;color:#2c3a55;-webkit-text-stroke:0.22px #2c3a55;transform:scale(0.9053,1.0);">CLIENT Payment Status</span>
<span class="t" style="left:34.50px;top:195px;font-size:7.8px;font-weight:400;color:#3a4862;transform:scale(0.9762,1.13);">11927</span>
<span class="t" style="left:96.50px;top:195px;font-size:7.8px;font-weight:400;color:#3a4862;transform:scale(0.9265,1.13);">Chelsea Travel, Anne - Jones</span>
<span class="t" style="left:286.50px;top:195px;font-size:7.8px;font-weight:400;color:#3a4862;transform:scale(0.9135,1.13);">Chelsea Travel</span>
<span class="t" style="left:389.50px;top:195px;font-size:7.8px;font-weight:400;color:#3a4862;transform:scale(1.0139,1.13);">16/May/25</span>
<span class="t" style="left:438.50px;top:195px;font-size:7.8px;font-weight:400;color:#3a4862;transform:scale(0.9643,1.13);">To pay - Full</span>
<span class="t" style="left:523.00px;top:195px;font-size:7.8px;font-weight:400;color:#3a4862;transform:scale(0.8625,1.13);">ZAR</span>
<span class="t" style="left:589.30px;top:195px;font-size:7.8px;font-weight:400;color:#3a4862;transform:scale(0.9311,1.13);">Depends on ROE</span>
<span class="t" style="left:662.80px;top:195px;font-size:7.8px;font-weight:400;color:#3a4862;transform:scale(1.0000,1.13);">1</span>
<span class="t" style="left:752.40px;top:197px;font-size:6.4px;font-weight:400;color:#44546f;-webkit-text-stroke:0.18px #44546f;transform:scale(0.9850,1.0);">TO DO</span>
<span class="t" style="left:34.50px;top:217px;font-size:7.8px;font-weight:400;color:#3a4862;transform:scale(0.9762,1.13);">11927</span>
<span class="t" style="left:96.50px;top:217px;font-size:7.8px;font-weight:400;color:#3a4862;transform:scale(0.9265,1.13);">Chelsea Travel, Anne - Jones</span>
<span class="t" style="left:286.50px;top:217px;font-size:7.8px;font-weight:400;color:#3a4862;transform:scale(0.9493,1.13);">Chobe Safari Lodge</span>
<span class="t" style="left:389.50px;top:217px;font-size:7.8px;font-weight:400;color:#3a4862;transform:scale(1.0000,1.13);">12/May/25</span>
<span class="t" style="left:438.50px;top:217px;font-size:7.8px;font-weight:400;color:#3a4862;transform:scale(0.9448,1.13);">To pay - Balance</span>
<span class="t" style="left:523.00px;top:217px;font-size:7.8px;font-weight:400;color:#3a4862;transform:scale(0.8500,1.13);">BWP</span>
<span class="t" style="left:589.30px;top:217px;font-size:7.8px;font-weight:400;color:#3a4862;transform:scale(0.9227,1.13);">15456</span>
<span class="t" style="left:662.80px;top:217px;font-size:7.8px;font-weight:400;color:#3a4862;transform:scale(0.9067,1.13);">1.45</span>
<span class="t" style="left:752.40px;top:218px;font-size:6.4px;font-weight:400;color:#44546f;-webkit-text-stroke:0.18px #44546f;transform:scale(0.9850,1.0);">TO DO</span>
<span class="t" style="left:96.50px;top:239px;font-size:7.8px;font-weight:400;color:#3a4862;transform:scale(0.9265,1.13);">Chelsea Travel, Anne - Jones</span>
<span class="t" style="left:286.50px;top:239px;font-size:7.8px;font-weight:400;color:#3a4862;transform:scale(0.9493,1.13);">Chobe Safari Lodge</span>
<span class="t" style="left:389.50px;top:239px;font-size:7.8px;font-weight:400;color:#3a4862;transform:scale(0.9583,1.13);">03/Sep/24</span>
<span class="t" style="left:438.50px;top:239px;font-size:7.8px;font-weight:400;color:#3a4862;transform:scale(0.9614,1.13);">To pay - Deposit</span>
<span class="t" style="left:523.00px;top:239px;font-size:7.8px;font-weight:400;color:#3a4862;transform:scale(0.8500,1.13);">BWP</span>
<span class="t" style="left:589.30px;top:239px;font-size:7.8px;font-weight:400;color:#3a4862;transform:scale(0.9294,1.13);">3742</span>
<span class="t" style="left:662.80px;top:239px;font-size:7.8px;font-weight:400;color:#3a4862;transform:scale(0.9067,1.13);">1.45</span>
<span class="t" style="left:752.40px;top:240px;font-size:6.4px;font-weight:400;color:#216e4e;-webkit-text-stroke:0.18px #216e4e;transform:scale(0.9474,1.0);">DONE</span>
<span class="t" style="left:34.50px;top:260px;font-size:7.8px;font-weight:400;color:#3a4862;transform:scale(0.9762,1.13);">11899</span>
<span class="t" style="left:96.50px;top:260px;font-size:7.8px;font-weight:400;color:#3a4862;transform:scale(0.9521,1.13);">Glenugi Travel, Shelley - Currie Music Grp</span>
<span class="t" style="left:286.50px;top:260px;font-size:7.8px;font-weight:400;color:#3a4862;transform:scale(0.9545,1.13);">Aquila</span>
<span class="t" style="left:389.50px;top:260px;font-size:7.8px;font-weight:400;color:#3a4862;transform:scale(1.0143,1.13);">10/Mar/25</span>
<span class="t" style="left:438.50px;top:260px;font-size:7.8px;font-weight:400;color:#3a4862;transform:scale(0.9448,1.13);">To pay - Balance</span>
<span class="t" style="left:523.00px;top:260px;font-size:7.8px;font-weight:400;color:#3a4862;transform:scale(0.8625,1.13);">ZAR</span>
<span class="t" style="left:589.30px;top:260px;font-size:7.8px;font-weight:400;color:#3a4862;transform:scale(0.9214,1.13);">32623.5</span>
<span class="t" style="left:662.80px;top:260px;font-size:7.8px;font-weight:400;color:#3a4862;transform:scale(1.0000,1.13);">1</span>
<span class="t" style="left:752.40px;top:262px;font-size:6.4px;font-weight:400;color:#44546f;-webkit-text-stroke:0.18px #44546f;transform:scale(0.9850,1.0);">TO DO</span>
<span class="t" style="left:34.50px;top:282px;font-size:7.8px;font-weight:400;color:#3a4862;transform:scale(0.9762,1.13);">11899</span>
<span class="t" style="left:96.50px;top:282px;font-size:7.8px;font-weight:400;color:#3a4862;transform:scale(0.9484,1.13);">Glenugi Travel, Shelley - Currie Music Group</span>
<span class="t" style="left:286.50px;top:282px;font-size:7.8px;font-weight:400;color:#3a4862;transform:scale(0.9434,1.13);">Hylton Ross Cape Town</span>
<span class="t" style="left:389.50px;top:282px;font-size:7.8px;font-weight:400;color:#3a4862;transform:scale(0.9857,1.13);">12/Feb/25</span>
<span class="t" style="left:389.50px;top:293px;font-size:7.8px;font-weight:400;color:#3a4862;transform:scale(0.9857,1.13);">12/Feb/25</span>
<span class="t" style="left:438.50px;top:282px;font-size:7.8px;font-weight:400;color:#3a4862;transform:scale(0.9643,1.13);">To pay - Full</span>
<span class="t" style="left:523.00px;top:282px;font-size:7.8px;font-weight:400;color:#3a4862;transform:scale(0.8625,1.13);">ZAR</span>
<span class="t" style="left:589.30px;top:282px;font-size:7.8px;font-weight:400;color:#3a4862;transform:scale(0.8533,1.13);">TBA</span>
<span class="t" style="left:662.80px;top:282px;font-size:7.8px;font-weight:400;color:#3a4862;transform:scale(1.0000,1.13);">1</span>
<span class="t" style="left:752.40px;top:283px;font-size:6.4px;font-weight:400;color:#44546f;-webkit-text-stroke:0.18px #44546f;transform:scale(0.9850,1.0);">TO DO</span>
<span class="t" style="left:34.50px;top:313px;font-size:7.8px;font-weight:400;color:#3a4862;transform:scale(0.9762,1.13);">11899</span>
<span class="t" style="left:96.50px;top:313px;font-size:7.8px;font-weight:400;color:#3a4862;transform:scale(0.9484,1.13);">Glenugi Travel, Shelley - Currie Music Group</span>
<span class="t" style="left:286.50px;top:313px;font-size:7.8px;font-weight:400;color:#3a4862;transform:scale(0.9565,1.13);">Protea Hotel Breakwater</span>
<span class="t" style="left:389.50px;top:313px;font-size:7.8px;font-weight:400;color:#3a4862;transform:scale(0.9857,1.13);">03/Feb/25</span>
<span class="t" style="left:389.50px;top:324px;font-size:7.8px;font-weight:400;color:#3a4862;transform:scale(1.0143,1.13);">07/Mar/25</span>
<span class="t" style="left:438.50px;top:313px;font-size:7.8px;font-weight:400;color:#3a4862;transform:scale(0.9448,1.13);">To pay - Balance</span>
<span class="t" style="left:523.00px;top:313px;font-size:7.8px;font-weight:400;color:#3a4862;transform:scale(0.8625,1.13);">ZAR</span>
<span class="t" style="left:589.30px;top:313px;font-size:7.8px;font-weight:400;color:#3a4862;transform:scale(0.9189,1.13);">131847.93</span>
<span class="t" style="left:662.80px;top:313px;font-size:7.8px;font-weight:400;color:#3a4862;transform:scale(1.0000,1.13);">1</span>
<span class="t" style="left:752.40px;top:314px;font-size:6.4px;font-weight:400;color:#44546f;-webkit-text-stroke:0.18px #44546f;transform:scale(0.9850,1.0);">TO DO</span>
<span class="t" style="left:34.50px;top:343px;font-size:7.8px;font-weight:400;color:#3a4862;transform:scale(0.9762,1.13);">11899</span>
<span class="t" style="left:96.50px;top:343px;font-size:7.8px;font-weight:400;color:#3a4862;transform:scale(0.9484,1.13);">Glenugi Travel, Shelley - Currie Music Group</span>
<span class="t" style="left:286.50px;top:343px;font-size:7.8px;font-weight:400;color:#3a4862;transform:scale(0.9565,1.13);">Protea Hotel Breakwater</span>
<span class="t" style="left:389.50px;top:343px;font-size:7.8px;font-weight:400;color:#3a4862;transform:scale(0.9853,1.13);">02/Jan/25</span>
<span class="t" style="left:389.50px;top:354px;font-size:7.8px;font-weight:400;color:#3a4862;transform:scale(0.9857,1.13);">05/Feb/25</span>
<span class="t" style="left:438.50px;top:343px;font-size:7.8px;font-weight:400;color:#3a4862;transform:scale(0.9706,1.13);">To pay - Installment</span>
<span class="t" style="left:523.00px;top:343px;font-size:7.8px;font-weight:400;color:#3a4862;transform:scale(0.8625,1.13);">ZAR</span>
<span class="t" style="left:589.30px;top:343px;font-size:7.8px;font-weight:400;color:#3a4862;transform:scale(0.9091,1.13);">65923.96</span>
<span class="t" style="left:662.80px;top:343px;font-size:7.8px;font-weight:400;color:#3a4862;transform:scale(1.0000,1.13);">1</span>
<span class="t" style="left:752.40px;top:344px;font-size:6.4px;font-weight:400;color:#44546f;-webkit-text-stroke:0.18px #44546f;transform:scale(0.9850,1.0);">TO DO</span>
<span class="t" style="left:34.50px;top:374px;font-size:7.8px;font-weight:400;color:#3a4862;transform:scale(0.9762,1.13);">11899</span>
<span class="t" style="left:96.50px;top:374px;font-size:7.8px;font-weight:400;color:#3a4862;transform:scale(0.9484,1.13);">Glenugi Travel, Shelley - Currie Music Group</span>
<span class="t" style="left:286.50px;top:374px;font-size:7.8px;font-weight:400;color:#3a4862;transform:scale(0.9565,1.13);">Protea Hotel Breakwater</span>
<span class="t" style="left:389.50px;top:374px;font-size:7.8px;font-weight:400;color:#3a4862;transform:scale(0.9722,1.13);">01/Dec/24</span>
<span class="t" style="left:389.50px;top:385px;font-size:7.8px;font-weight:400;color:#3a4862;transform:scale(0.9853,1.13);">03/Jan/25</span>
<span class="t" style="left:438.50px;top:374px;font-size:7.8px;font-weight:400;color:#3a4862;transform:scale(0.9706,1.13);">To pay - Installment</span>
<span class="t" style="left:523.00px;top:374px;font-size:7.8px;font-weight:400;color:#3a4862;transform:scale(0.8625,1.13);">ZAR</span>
<span class="t" style="left:589.30px;top:374px;font-size:7.8px;font-weight:400;color:#3a4862;transform:scale(0.9091,1.13);">39554.38</span>
<span class="t" style="left:662.80px;top:374px;font-size:7.8px;font-weight:400;color:#3a4862;transform:scale(1.0000,1.13);">1</span>
<span class="t" style="left:752.40px;top:375px;font-size:6.4px;font-weight:400;color:#44546f;-webkit-text-stroke:0.18px #44546f;transform:scale(0.9850,1.0);">TO DO</span>
<span class="t" style="left:34.50px;top:405px;font-size:7.8px;font-weight:400;color:#3a4862;transform:scale(0.9762,1.13);">11886</span>
<span class="t" style="left:96.50px;top:405px;font-size:7.8px;font-weight:400;color:#3a4862;transform:scale(0.9904,1.13);">Coralyn Griffith</span>
<span class="t" style="left:286.50px;top:405px;font-size:7.8px;font-weight:400;color:#3a4862;transform:scale(0.9464,1.13);">Blue Safari - Astove</span>
<span class="t" style="left:389.50px;top:405px;font-size:7.8px;font-weight:400;color:#3a4862;transform:scale(1.0000,1.13);">29/Nov/24</span>
<span class="t" style="left:438.50px;top:405px;font-size:7.8px;font-weight:400;color:#3a4862;transform:scale(0.9448,1.13);">To pay - Balance</span>
<span class="t" style="left:523.00px;top:405px;font-size:7.8px;font-weight:400;color:#3a4862;transform:scale(0.9062,1.13);">USD</span>
<span class="t" style="left:589.30px;top:405px;font-size:7.8px;font-weight:400;color:#3a4862;transform:scale(0.9091,1.13);">14561.50</span>
<span class="t" style="left:662.80px;top:405px;font-size:7.8px;font-weight:400;color:#3a4862;transform:scale(0.9067,1.13);">18.9</span>
<span class="t" style="left:752.40px;top:406px;font-size:6.4px;font-weight:400;color:#44546f;-webkit-text-stroke:0.18px #44546f;transform:scale(0.9850,1.0);">TO DO</span>
<span class="t" style="left:34.50px;top:426px;font-size:7.8px;font-weight:400;color:#3a4862;transform:scale(0.9762,1.13);">11808</span>
<span class="t" style="left:96.50px;top:426px;font-size:7.8px;font-weight:400;color:#3a4862;transform:scale(0.9625,1.13);">Indo Jet Travel, Mary Brendani - Mr Neil Hilary</span>
<span class="t" style="left:286.50px;top:426px;font-size:7.8px;font-weight:400;color:#3a4862;transform:scale(0.9452,1.13);">Kapama River Lodge</span>
<span class="t" style="left:389.50px;top:426px;font-size:7.8px;font-weight:400;color:#3a4862;transform:scale(1.0000,1.13);">03/Oct/24</span>
<span class="t" style="left:438.50px;top:426px;font-size:7.8px;font-weight:400;color:#3a4862;transform:scale(0.9448,1.13);">To pay - Balance</span>
<span class="t" style="left:523.00px;top:426px;font-size:7.8px;font-weight:400;color:#3a4862;transform:scale(0.8625,1.13);">ZAR</span>
<span class="t" style="left:589.30px;top:426px;font-size:7.8px;font-weight:400;color:#3a4862;transform:scale(0.9091,1.13);">36787.50</span>
<span class="t" style="left:662.80px;top:426px;font-size:7.8px;font-weight:400;color:#3a4862;transform:scale(1.0000,1.13);">1</span>
<span class="t" style="left:752.40px;top:427px;font-size:6.4px;font-weight:400;color:#44546f;-webkit-text-stroke:0.18px #44546f;transform:scale(0.9850,1.0);">TO DO</span>
<span class="t" style="left:35.00px;top:448px;font-size:7.7px;font-weight:700;color:#172b4d;transform:scale(0.9294,1.0);">1–10</span>
<span class="t" style="left:53.80px;top:448px;font-size:7.7px;font-weight:400;color:#44546f;transform:scale(0.8714,1.0);">of</span>
<span class="t" style="left:62.68px;top:448px;font-size:7.7px;font-weight:400;color:#4c7fe0;transform:scale(0.9250,1.0);">10</span>
<span class="t" style="left:41.60px;top:471px;font-size:6.9px;font-weight:400;color:#6b778c;transform:scale(0.9036,1.0);">Just now</span>
<span class="t" style="left:30.80px;top:501px;font-size:8px;font-weight:400;color:#1f1f1f;transform:scale(0.8068,1.0);">FTSE jse 40</span>
<span class="t" style="left:31.30px;top:510px;font-size:7px;font-weight:400;color:#2f8a2f;transform:scale(0.9375,1.0);">+1,33%</span>
<span class="t" style="left:284.00px;top:505px;font-size:8.5px;font-weight:400;color:#5a5a5a;transform:scale(0.9074,1.0);">Search</span>
<span class="t" style="left:769.30px;top:501px;font-size:7px;font-weight:400;color:#1f1f1f;transform:scale(0.9667,1.0);">ENG</span>
<span class="t" style="left:772.00px;top:510px;font-size:7px;font-weight:400;color:#1f1f1f;transform:scale(0.9300,1.0);">US</span>
<span class="t" style="left:863.50px;top:501px;font-size:7px;font-weight:400;color:#1f1f1f;transform:scale(1.0176,1.0);">10:21</span>
<span class="t" style="left:843.50px;top:510px;font-size:7px;font-weight:400;color:#1f1f1f;transform:scale(1.0657,1.0);">2024/09/26</span>
</div></body></html>
